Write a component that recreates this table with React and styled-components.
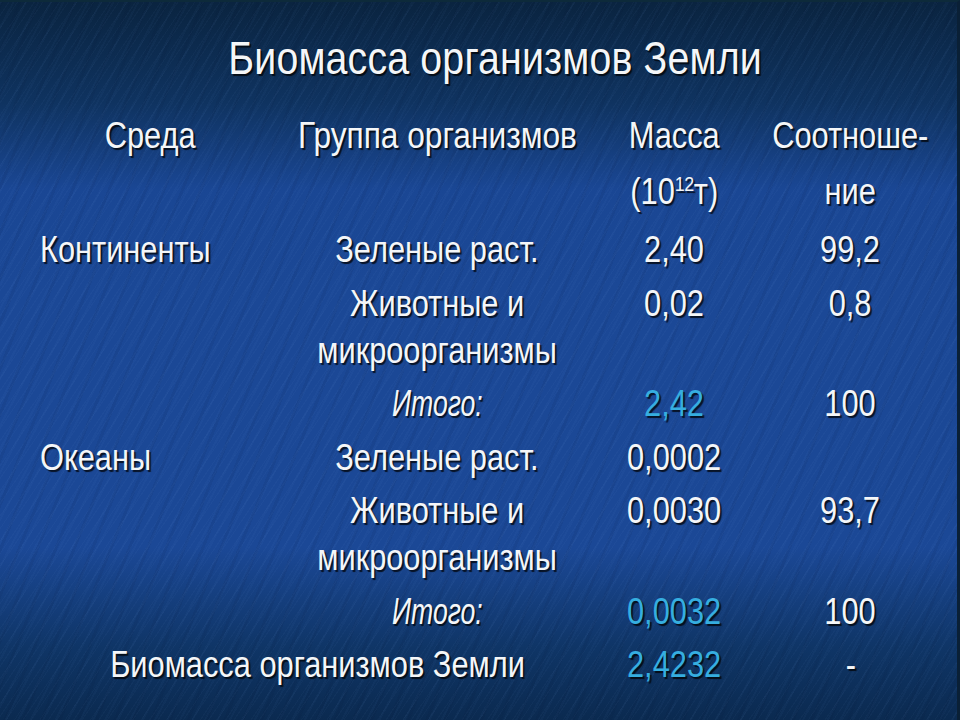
import React from 'react'
import styled, { createGlobalStyle } from 'styled-components'

const GlobalStyle = createGlobalStyle`
  html, body { margin: 0; padding: 0; background: #0b2a48; }
  * { box-sizing: border-box; }
`

const Slide = styled.div`
  position: relative;
  width: 960px;
  height: 720px;
  overflow: hidden;
  font-family: "Liberation Sans", Arial, sans-serif;
  color: #f4f6f8;
  text-shadow: 2px 2px 1px rgba(0, 0, 0, 0.75);
  background:
    repeating-linear-gradient(118deg, rgba(120, 170, 240, 0.035) 0 2px, transparent 2px 11px),
    repeating-linear-gradient(124deg, rgba(150, 190, 255, 0.03) 0 1px, transparent 1px 7px),
    repeating-linear-gradient(112deg, rgba(0, 10, 40, 0.06) 0 3px, transparent 3px 17px),
    linear-gradient(180deg, #0a2440 0%, #0f3360 14%, #18449060 26%, transparent 40%),
    linear-gradient(0deg, #0b2a50 0%, #0f3566 10%, transparent 24%),
    #1b4896;
  border-right: 3px solid #0a2036;
  border-top: 2px solid #0d2a3a;
  padding-top: 26px;
`

const Title = styled.h1`
  margin: 0;
  padding-left: 34px;
  text-align: center;
  font-weight: normal;
  font-size: 47px;
  line-height: 60px;
  letter-spacing: 0.2px;
`

const Narrow = styled.span`
  display: inline-block;
  white-space: nowrap;
  transform: scaleX(${(p) => p.$k || 0.855});
  transform-origin: ${(p) => (p.$left ? 'left center' : 'center center')};
`

const Table = styled.div`
  display: grid;
  grid-template-columns: 240px 334px 140px 213px;
  row-gap: 6.5px;
  margin-top: 24px;
  padding-left: 30px;
  font-size: 36px;
  line-height: 47px;
`

const Cell = styled.div`
  text-align: ${(p) => p.$align || 'center'};
  padding-left: ${(p) => (p.$align === 'left' ? '10px' : '0')};
  color: ${(p) => (p.$accent ? '#36aee0' : 'inherit')};
  font-style: ${(p) => (p.$italic ? 'italic' : 'normal')};
  grid-column: ${(p) => (p.$span ? `span ${p.$span}` : 'auto')};
  white-space: nowrap;
`

const HeadCell = styled(Cell)`
  line-height: 56px;
  margin-top: -4.5px;
`

const Sup = styled.sup`
  font-size: 0.58em;
  line-height: 0;
  vertical-align: 0.62em;
  letter-spacing: -0.5px;
`

const rows = [
  ['Континенты', 'Зеленые раст.', '2,40', '99,2'],
  ['', 'Животные и микроорганизмы', '0,02', '0,8'],
  ['', 'Итого:', '2,42', '100', true],
  ['Океаны', 'Зеленые раст.', '0,0002', ''],
  ['', 'Животные и микроорганизмы', '0,0030', '93,7'],
  ['', 'Итого:', '0,0032', '100', true],
]

export default function App() {
  return (
    <Slide>
      <GlobalStyle />
      <Title>
        <Narrow $k={0.836}>Биомасса организмов Земли</Narrow>
      </Title>
      <Table>
        <HeadCell>
          <Narrow>Среда</Narrow>
        </HeadCell>
        <HeadCell>
          <Narrow $k={0.88}>Группа организмов</Narrow>
        </HeadCell>
        <HeadCell>
          <Narrow>
            Масса
            <br />
            (10<Sup>12</Sup>т)
          </Narrow>
        </HeadCell>
        <HeadCell>
          <Narrow>
            Соотноше-
            <br />
            ние
          </Narrow>
        </HeadCell>
        {rows.map(([env, group, mass, share, total], i) => (
          <React.Fragment key={i}>
            <Cell $align="left">
              <Narrow $left>{env}</Narrow>
            </Cell>
            <Cell $italic={total}>
              <Narrow $k={total ? 0.74 : 0.855}>
                {group === 'Животные и микроорганизмы' ? (
                  <>
                    Животные и
                    <br />
                    микроорганизмы
                  </>
                ) : (
                  group
                )}
              </Narrow>
            </Cell>
            <Cell $accent={total}>
              <Narrow>{mass}</Narrow>
            </Cell>
            <Cell>
              <Narrow>{share}</Narrow>
            </Cell>
          </React.Fragment>
        ))}
        <Cell $span={2}>
          <Narrow>Биомасса организмов Земли</Narrow>
        </Cell>
        <Cell $accent>
          <Narrow>2,4232</Narrow>
        </Cell>
        <Cell>
          <Narrow>-</Narrow>
        </Cell>
      </Table>
    </Slide>
  )
}
